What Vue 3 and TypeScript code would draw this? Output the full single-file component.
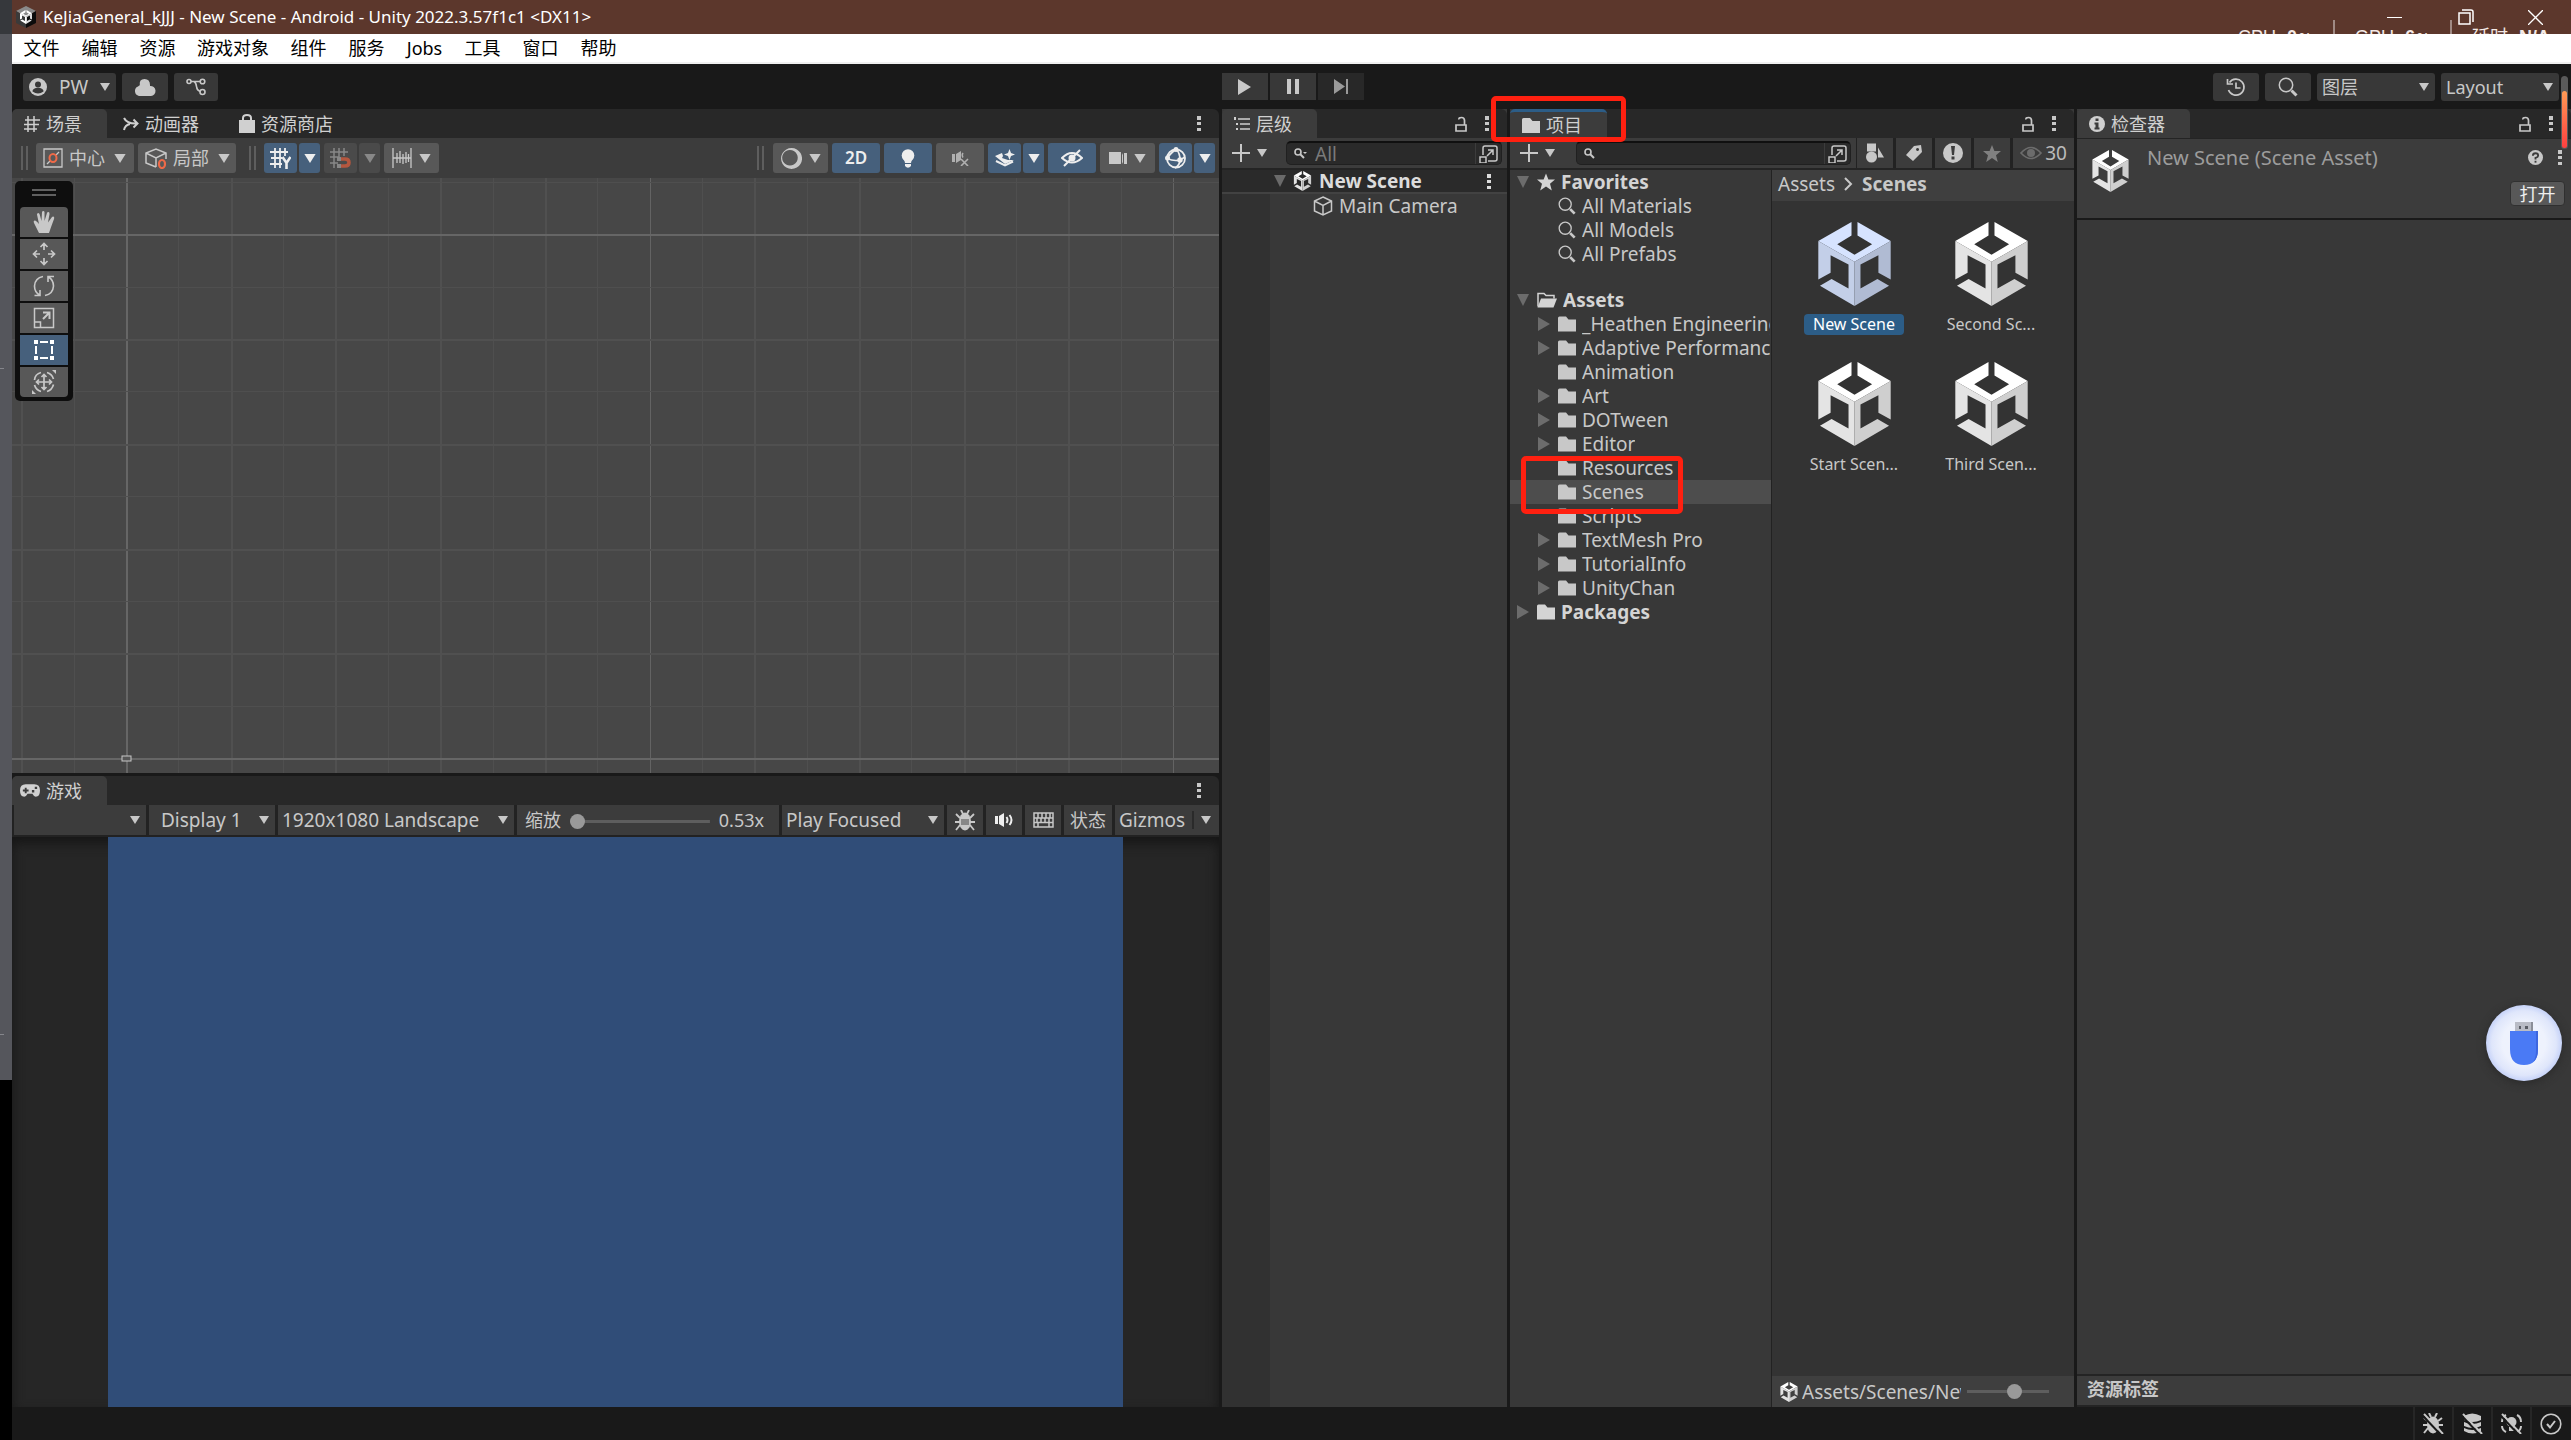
<script setup lang="ts">
import { h, ref } from 'vue'

const S = 'fill="none" stroke="currentColor"'
const logo = (a: string, b: string, c: string) =>
  `<path fill="${a}" d="M100 0V41L57 67l52 32 53-32-44-26V0L218 57 109 120 0 57z"/>` +
  `<path fill="${b}" d="M0 57l109 63V253L5 192l35-20 51 28V128L37 100v53L0 173z"/>` +
  `<path fill="${c}" d="M218 57L109 120V253L213 192l-35-20-51 28V128l54-28v53l37 20z"/>`

const glyphs: Record<string, [string, string]> = {
  unity: ['0 0 218 253', logo('#ffffff', '#e4e4e4', '#cfcfcf')],
  unitySelected: ['0 0 218 253', logo('#d6e3ff', '#c3cfe8', '#b0bbd3')],
  app: ['0 0 20 22', `<path fill="#8a8a8a" d="M10 0l10 5-10 6L0 5z"/><path fill="#3a3a3a" d="M0 5l10 6v11L0 17z"/><path fill="#0c0c0c" d="M20 5l-10 6v11l10-5z"/><g transform="translate(4 4) scale(.055)">${logo('#fff', '#fff', '#ddd')}</g>`],
  caret: ['0 0 10 8', '<path d="M0 0h10L5 8z"/>'],
  right: ['0 0 12 14', '<path d="M0 0v14l12-7z"/>'],
  down: ['0 0 12 12', '<path d="M0 0h12L6 12z"/>'],
  dots: ['0 0 4 15', '<path d="M0 0h4v4H0zM0 6h4v3H0zM0 12h4v3H0z"/>'],
  lock: ['0 0 12 16', `<path ${S} stroke-width="1.700" d="M1 9h10v6H1zM9.500 9V4.500Q9.500 1.500 6.500 1.500T4 3.500"/>`],
  user: ['0 0 18 18', '<circle cx="9" cy="9" r="9"/><circle cx="9" cy="6.500" r="3" fill="#383838"/><path fill="#383838" d="M3.500 13.500c0-5 11-5 11 0q-5.500 4-11 0z"/>'],
  cloud: ['0 0 22 17', '<path d="M5 17a5 5 0 0 1-1-9.500Q5 6.500 5.800 6.300 5 0 10.500 0T16 6q0 1 0 1a5 5 0 0 1 1 10z"/>'],
  branch: ['0 0 20 18', `<g ${S} stroke-width="1.600"><circle cx="3" cy="3.500" r="2"/><circle cx="16.500" cy="3.500" r="2.300"/><circle cx="16.500" cy="14" r="2.500"/><path d="M5 3.500h9M8 3.500q2 1 2.500 5t3.500 5"/></g>`],
  play: ['0 0 14 16', '<path d="M0 0l13 8-13 8z"/>'],
  pause: ['0 0 12 15', '<path d="M0 0h4v15H0zM8 0h4v15H8z"/>'],
  step: ['0 0 15 15', '<path d="M0 0l11 7.500L0 15zM12 0h2v15h-2z"/>'],
  history: ['0 0 20 20', `<path ${S} stroke-width="1.700" d="M3.500 5.500A8 8 0 1 1 2.500 13M1.500 2v5h5.500M10 5.500v5.500h4.500"/>`],
  search: ['0 0 20 20', `<circle cx="8" cy="8" r="6.700" ${S} stroke-width="1.500"/><path ${S} stroke-width="3" d="M13.500 13.500l5 5"/>`],
  mag: ['0 0 13 11', `<circle cx="4" cy="4" r="3" ${S} stroke-width="1.600"/><path ${S} stroke-width="2" d="M6 6l4 4"/>`],
  magMenu: ['0 0 13 11', `<circle cx="4" cy="4" r="3" ${S} stroke-width="1.600"/><path ${S} stroke-width="2" d="M6 6l4 4"/><path d="M9 4h4l-2 2z"/>`],
  hash: ['0 0 16 16', `<path ${S} stroke-width="1.500" d="M4 0v16M10 0v16M1 4h15M0 8.500h15M0 13h13"/>`],
  animator: ['0 0 16 14', `<path ${S} stroke-width="2" d="M1 1q3 6 13 5.500M1 13q1-5 6-6M10.500 2.500l4 4-4 4"/>`],
  bag: ['0 0 16 19', `<path d="M0 6h16v13H0z"/><path ${S} stroke-width="2" d="M4 9V4q0-3 4-3t4 3v5"/>`],
  list: ['0 0 16 14', `<path ${S} stroke-width="1.500" d="M4 2h12M6 7h10M6 12h10"/><path d="M0 0h2v3H0zM2 6h2v2H2zM2 11h2v2H2z"/>`],
  folder: ['0 0 18 15', '<path d="M0 1.500Q0 0 1.500 0H8l2.500 3H18v12H0z"/>'],
  folderOpen: ['0 0 20 15', `<path ${S} stroke-width="1.500" d="M1 14V1h6l2 2h8v3"/><path d="M4 6h16l-3.500 9H0.500z"/>`],
  info: ['0 0 16 16', '<circle cx="8" cy="8" r="8"/><path fill="#3c3c3c" d="M6.500 2.500h3v2.500h-3zM5.500 6.500h4v5h1v2h-5v-2h1v-3h-1z"/>'],
  help: ['0 0 16 16', '<circle cx="8" cy="8" r="8"/><path fill="none" stroke="#3c3c3c" stroke-width="2" d="M5.200 6.200Q5.200 3.500 8 3.500t2.800 2.500Q10.800 7.500 8 8.500v1.500"/><path fill="#3c3c3c" d="M7 11.500h2v2H7z"/>'],
  gamepad: ['0 0 21 13', '<path d="M6 0h9q6 0 6 6.500T16.500 13q-2 0-3.500-3H8q-1.500 3-3.500 3Q0 13 0 6.500T6 0z"/><path fill="#3c3c3c" d="M5 3.500h2v2h2v2H7v2H5v-2H3v-2h2zM15.500 2.500h2.500v2.500h-2.500zM12.500 6h2.500v2.500h-2.500z"/>'],
  pivot: ['0 0 20 20', `<path ${S} stroke-width="1.300" d="M1 1h18v18H1zM4 16l3-3M13 7l3-3"/><ellipse cx="10" cy="10" rx="3.500" ry="4" fill="none" stroke="#ef6a48" stroke-width="2"/>`],
  local: ['0 0 22 21', `<path ${S} stroke-width="1.500" d="M11 19L1 15V5l10-4 10 4v6M1 5l10 5 10-5M11 10v9"/><ellipse cx="17" cy="16" rx="3" ry="4" fill="#585858" stroke="#ef6a48" stroke-width="2.200"/>`],
  gridY: ['0 0 21 21', `<path ${S} stroke-width="1.800" d="M5 0v20M10 0v20M15 0v8M0 4h18M1 10h11M0 16h12"/><path ${S} stroke-width="2.600" d="M12.500 9l4 6 4-6M16.500 14v7"/>`],
  magnet: ['0 0 21 20', `<path ${S} stroke-width="1.500" d="M4 0v20M9 0v10M14 0v8M0 4h18M0 9h9M0 15h8"/><path fill="none" stroke="#b4573f" stroke-width="3.500" d="M11 11h4q4 0 4 3.500T15 18h-4"/><path d="M7 9h4v4H7zM7 16h4v4H7z"/>`],
  ruler: ['0 0 20 20', `<path ${S} stroke-width="1.300" d="M1 0v20M19 0v20M1 10h18M5 5v10M8 3v12M11 6v10M14 4v11M16.500 6v8"/>`],
  sphere: ['0 0 21 21', `<path fill-rule="evenodd" d="M10.500 0a10.500 10.500 0 1 0 .1 0zM9 2a7.800 7.800 0 1 1-.1 0z"/>`],
  bulb: ['0 0 14 19', '<circle cx="7" cy="6.500" r="6.300"/><path d="M3 10h8l-1 4H4zM4 15h6v2q-3 3.500-6 0z"/>'],
  mute: ['0 0 17 15', `<path d="M0 3h3v8H0zM4 3l5-3v9l-5 3z"/><path ${S} stroke-width="1.600" d="M11 2q-1.500 2 0 4.500M9 8l7 7M16 8l-7 7"/>`],
  effects: ['0 0 20 18', `<path d="M14.500 0l1.500 4 4 1.500-4 1.500-1.500 4-1.500-4-4-1.500 4-1.500zM0 7l7-3 1 3-1 2 6 2 6 0-9 4z"/><path ${S} stroke-width="2" d="M1 12l9 4.500 8-4"/>`],
  eyeOff: ['0 0 22 18', `<path ${S} stroke-width="2" d="M1 9Q11-1 21 9 11 18 1 9zM3 17L19 1"/><circle cx="11" cy="9" r="3.500"/>`],
  camera: ['0 0 18 13', '<path d="M0 0h12v12H0zM13 3l1-2v11l-1-2zM15 1h3v11h-3z"/>'],
  gizmo: ['0 0 22 22', `<circle cx="11" cy="11.500" r="9" ${S} stroke-width="1.800"/><path ${S} stroke-width="1.700" d="M11 2Q4 8 2 11.500q7 3 13 1.500 0-7-4-11M15 13q0 5-5 8M15 13l5-3"/><circle cx="11" cy="2.500" r="2.500"/><circle cx="2.500" cy="11" r="2.500"/><circle cx="15" cy="13" r="2.700"/>`],
  hand: ['0 0 22 22', `<path d="M6 22Q4 18 1 12q-1-2 .5-2.500T6 13L4 3.500Q4 2 5.200 2t1.500 1.500L8.500 10 9 1.200Q9.200 0 10.300 0t1.200 1.200V10L14 2q.5-1.200 1.500-1T16.500 3L15 11.500 19 6q1-1 1.800-.2T21 8q-3 8-5 14z"/>`],
  move: ['0 0 24 24', `<path ${S} stroke-width="1.700" d="M12 8V2M8.500 5L12 1.500 15.500 5M12 16v6M8.500 19l3.500 3.500 3.500-3.500M8 12H2M5 8.500L1.500 12 5 15.500M16 12h6M19 8.500l3.500 3.500-3.500 3.500"/>`],
  rotate: ['0 0 22 22', `<path ${S} stroke-width="1.600" d="M10 1.500Q2 3 1.500 11q0 6 5 9M1.500 20.500H7V15M12 20.500q8-1.500 8.500-9.500 0-6-5-9M21 1.500h-6V7"/>`],
  scale: ['0 0 22 22', `<path ${S} stroke-width="1.500" d="M1.500 1.500h19v19h-19zM1.500 15h6v5.500"/><path ${S} stroke-width="2" d="M10 12l6-6M10 5.500h6.500V12"/>`],
  rect: ['0 0 20 20', `<path ${S} stroke-width="2" d="M6 2h8M6 18h8M2 6v8M18 6v8"/><path d="M0 0h4v4H0zM16 0h4v4h-4zM0 16h4v4H0zM16 16h4v4h-4z"/>`],
  transform: ['0 0 24 24', `<g ${S} stroke-width="1.700"><path d="M12 5v14M5 12h14M9.500 7L12 4.500 14.500 7M9.500 17l2.500 2.500 2.500-2.500M7 9.500L4.500 12 7 14.500M17 9.500l2.500 2.500-2.500 2.500M9 2.500Q3 4 2.500 10M15 2.500Q20 4 21.500 9M9 21.500Q4 20 2.500 15M15 21.500q5-1.500 6.500-7"/></g><path d="M20 0h4v4zM0 20v4h4z"/>`],
  plus: ['0 0 18 18', `<path ${S} stroke-width="2" d="M9 0v18M0 9h18"/>`],
  picker: ['0 0 19 18', `<path ${S} stroke-width="1.500" d="M4 10V3q0-2 2-2h10q2 0 2 2v11q0 2-2 2H9M8 11l6-6M9 5h5v5M1 12h6v6H1z"/>`],
  cube: ['0 0 20 20', `<path ${S} stroke-width="1.500" d="M10 1l8.500 4v10L10 19l-8.500-4V5zM1.500 5L10 9.500 18.500 5M10 9.500V19"/>`],
  star: ['0 0 18 17', '<path d="M9 0l2.400 6H18l-5 4.200L14.800 17 9 13l-5.800 4L5 10.200 0 6h6.600z"/>'],
  shapes: ['0 0 18 19', '<path d="M1 0h9v8H1zM12 4l6 10h-6z"/><circle cx="5.500" cy="13.500" r="5.500"/>'],
  tag: ['0 0 16 16', '<path fill-rule="evenodd" d="M8 1l7-1 1 7-9 9-7-6zM11.500 3a1.500 1.500 0 1 0 .1 0z"/>'],
  alert: ['0 0 20 20', '<circle cx="10" cy="10" r="10"/><path fill="#3c3c3c" d="M8 3h4l-1 9H9zM8.500 13.500h3v3h-3z"/>'],
  eye: ['0 0 22 14', `<path ${S} stroke-width="1.700" d="M1 7Q11-4 21 7 11 18 1 7z"/><circle cx="11" cy="7" r="4"/>`],
  crumb: ['0 0 9 14', `<path ${S} stroke-width="2" d="M1 1l6 6-6 6"/>`],
  bug: ['0 0 20 21', `<ellipse cx="10" cy="11.500" rx="6" ry="9"/><path ${S} stroke-width="1.800" d="M6 0l2 4M14 0l-2 4M1 4l4 4M19 4l-4 4M0 12h20M1 20l4-5M19 20l-4-5"/><path fill="#888" d="M6 9h8v6H6z"/>`],
  sound: ['0 0 18 14', `<path d="M0 3h3v8H0zM4 3l5-3v14l-5-3z"/><path ${S} stroke-width="2" d="M11.500 4q2 3 0 6M14.500 2q4 5 0 10"/>`],
  keyboard: ['0 0 21 16', `<path ${S} stroke-width="1.500" d="M1 1h19v14H1zM1 6h19M1 10.500h19M5 1v5M9 1v5M13 1v5M17 1v5M4 6v4M8 6v4M12 6v4M16 6v4M5 11v4M16 11v4"/>`],
  bugOff: ['0 0 21 21', `<ellipse cx="10" cy="12" rx="6" ry="8.500"/><path ${S} stroke-width="2" d="M6 0l2 4M14 0l-2 4M1 5l4 3M19 5l-4 3M0 12h20M1 20l4-5M19 20l-4-5M1 1l19 20"/><path stroke="#191919" stroke-width="2" d="M0 3l18 19"/>`],
  dbOff: ['0 0 21 21', `<path d="M2 3q8-5 17 0v4q-8 4-17 0zM2 9q8 4 17 0v4q-8 4-17 0zM2 15q8 4 17 0v3q-8 5-17 0z"/><path ${S} stroke-width="2" d="M1 1l19 20"/><path stroke="#191919" stroke-width="2" d="M0 3l18 19"/>`],
  lightOff: ['0 0 21 21', `<path ${S} stroke-width="2" d="M5 2Q1 4 1 9M1 13q0 4 4 6M16 2q4 2 4 7M20 13q0 4-4 6"/><circle cx="10.500" cy="9" r="5"/><path d="M8 14h5v4H8z"/><path ${S} stroke-width="2" d="M1 1l19 20"/><path stroke="#191919" stroke-width="2" d="M0 3l18 19"/>`],
  check: ['0 0 22 22', `<circle cx="11" cy="11" r="9.800" ${S} stroke-width="1.600"/><path ${S} stroke-width="2" d="M7 11l3 3.500 5-6.500"/>`],
  min: ['0 0 15 15', '<path stroke="currentColor" d="M0 7.500h15"/>'],
  restore: ['0 0 16 16', `<path ${S} stroke-width="1.500" d="M1 4h11v11H1zM4 1h9q2 0 2 2v10"/>`],
  close: ['0 0 15 15', `<path ${S} stroke-width="1.300" d="M0 0l15 15M15 0L0 15"/>`],
  usb: ['0 0 28 44', '<path fill="#b9bcc6" d="M5 0h18v10H5z"/><path fill="#8b8e98" d="M21 0h2v10h-2z"/><path fill="#5a5d66" d="M9 4h2v3H9zM15 4h3v3h-3z"/><path fill="#4a7af5" d="M0 9h28v18q0 16-14 16T0 27z"/><path fill="#3c66e0" d="M26 9h2v18q0 10-5 13 3-4 3-11z"/>'],
}

const Icon = (p: { n: string; w: number | string; t: number | string }) => {
  const [box, body] = glyphs[p.n]
  return h('svg', {
    viewBox: box, width: p.w, height: p.t, fill: 'currentColor',
    'aria-hidden': 'true', preserveAspectRatio: 'xMidYMid meet', innerHTML: body,
  })
}
Icon.props = ['n', 'w', 't']

const menus = ['文件', '编辑', '资源', '游戏对象', '组件', '服务', 'Jobs', '工具', '窗口', '帮助']
const tools: [string, string, number][] = [
  ['hand', '手形工具', 22], ['move', '移动', 24], ['rotate', '旋转', 22],
  ['scale', '缩放', 22], ['rect', '矩形', 20], ['transform', '变换', 24],
]

interface Node { label: string; icon: string; kids?: boolean; open?: boolean; root?: boolean; gap?: boolean; selected?: boolean }
const tree: Node[] = [
  { label: 'Favorites', icon: 'star', root: true, kids: true, open: true },
  { label: 'All Materials', icon: 'search' },
  { label: 'All Models', icon: 'search' },
  { label: 'All Prefabs', icon: 'search' },
  { label: 'Assets', icon: 'folderOpen', root: true, kids: true, open: true, gap: true },
  { label: '_Heathen Engineering', icon: 'folder', kids: true },
  { label: 'Adaptive Performance', icon: 'folder', kids: true },
  { label: 'Animation', icon: 'folder' },
  { label: 'Art', icon: 'folder', kids: true },
  { label: 'DOTween', icon: 'folder', kids: true },
  { label: 'Editor', icon: 'folder', kids: true },
  { label: 'Resources', icon: 'folder' },
  { label: 'Scenes', icon: 'folder', selected: true },
  { label: 'Scripts', icon: 'folder' },
  { label: 'TextMesh Pro', icon: 'folder', kids: true },
  { label: 'TutorialInfo', icon: 'folder', kids: true },
  { label: 'UnityChan', icon: 'folder', kids: true },
  { label: 'Packages', icon: 'folder', root: true, kids: true },
]
const assets = ['New Scene', 'Second Sc...', 'Start Scen...', 'Third Scen...']

// World grid of the 2D scene view: ten cells per major line.
const cell = 52.36
const originX = 115
const originY = 581
const line = (origin: number, i: number) => ({
  at: Math.round(origin + i * cell),
  kind: i === 0 ? 'axis' : i % 10 === 0 ? 'major' : i % 2 === 0 ? 'even' : 'odd',
})
const vertical = Array.from({ length: 60 }, (_, i) => line(originX, i - 2))
const horizontal = Array.from({ length: 14 }, (_, i) => {
  const l = line(originY, -i)
  return i === 10 ? { ...l, kind: 'axis' } : l
})

const zoomScale = ref(0)
const thumbSize = ref(60)
const hierarchyQuery = ref('')
const projectQuery = ref('')
</script>

<template>
  <div class="screen">
    <aside class="edge"><i class="edge-top"></i><i class="edge-mid"></i></aside>
    <div class="editor">
      <header class="titlebar">
        <Icon n="app" w="20" t="22" />
        <h1>KeJiaGeneral_kJJJ - New Scene - Android - Unity 2022.3.57f1c1 &lt;DX11&gt;</h1>
        <div class="window-buttons">
          <button aria-label="最小化"><Icon n="min" w="15" t="15" /></button>
          <button aria-label="还原"><Icon n="restore" w="16" t="16" /></button>
          <button aria-label="关闭"><Icon n="close" w="15" t="15" /></button>
        </div>
        <div class="stats">
          <span>CPU <b>0<small>%</small></b></span><span>GPU <b>6<small>%</small></b></span><span>延时 <b>N/A</b></span>
        </div>
      </header>
      <nav class="menubar">
        <button v-for="m in menus" :key="m">{{ m }}</button>
      </nav>

      <div class="mainbar">
        <div class="main-left">
          <button class="box user"><Icon n="user" w="18" t="18" /><span>PW</span><Icon n="caret" w="10" t="8" /></button>
          <button class="box" aria-label="云服务"><Icon n="cloud" w="22" t="17" /></button>
          <button class="box vcs" aria-label="版本控制"><Icon n="branch" w="20" t="18" /></button>
        </div>
        <div class="main-play">
          <button class="box" aria-label="播放"><Icon n="play" w="14" t="16" /></button>
          <button class="box" aria-label="暂停"><Icon n="pause" w="12" t="15" /></button>
          <button class="box faded" aria-label="步进"><Icon n="step" w="15" t="15" /></button>
        </div>
        <div class="main-right">
          <button class="box" aria-label="历史"><Icon n="history" w="20" t="20" /></button>
          <button class="box" aria-label="搜索"><Icon n="search" w="20" t="20" /></button>
          <label class="box pick"><select aria-label="图层"><option>图层</option></select><Icon n="caret" w="10" t="8" /></label>
          <label class="box pick"><select aria-label="布局"><option>Layout</option></select><Icon n="caret" w="10" t="8" /></label>
        </div>
      </div>

      <main class="docks">
        <div class="column">
          <section class="scene">
            <div class="tabs">
              <button class="tab on"><Icon n="hash" w="16" t="16" />场景</button>
              <button class="tab"><Icon n="animator" w="16" t="14" />动画器</button>
              <button class="tab"><Icon n="bag" w="16" t="19" />资源商店</button>
              <button class="dots" aria-label="更多"><Icon n="dots" w="4" t="15" /></button>
            </div>
            <div class="scenebar">
              <i class="grip"></i>
              <button class="sb wide"><Icon n="pivot" w="20" t="20" />中心<Icon n="caret" w="12" t="9" /></button>
              <button class="sb wide"><Icon n="local" w="22" t="21" />局部<Icon n="caret" w="12" t="9" /></button>
              <i class="grip second"></i>
              <div class="pair"><button class="sb on" aria-label="网格"><Icon n="gridY" w="21" t="21" /></button><button class="sb on arrow" aria-label="网格选项"><Icon n="caret" w="12" t="9" /></button></div>
              <div class="pair dim"><button class="sb" aria-label="吸附"><Icon n="magnet" w="21" t="20" /></button><button class="sb arrow" aria-label="吸附选项"><Icon n="caret" w="12" t="9" /></button></div>
              <button class="sb menu" aria-label="增量"><Icon n="ruler" w="20" t="20" /><Icon n="caret" w="12" t="9" /></button>
              <i class="grip push"></i>
              <button class="sb menu" aria-label="绘制模式"><Icon n="sphere" w="21" t="21" /><Icon n="caret" w="12" t="9" /></button>
              <button class="sb mid on two">2D</button>
              <button class="sb mid on" aria-label="光照"><Icon n="bulb" w="14" t="19" /></button>
              <button class="sb mid soft" aria-label="静音"><Icon n="mute" w="17" t="15" /></button>
              <div class="pair"><button class="sb on" aria-label="特效"><Icon n="effects" w="20" t="18" /></button><button class="sb on arrow" aria-label="特效选项"><Icon n="caret" w="12" t="9" /></button></div>
              <button class="sb mid on" aria-label="隐藏对象"><Icon n="eyeOff" w="22" t="18" /></button>
              <button class="sb menu" aria-label="相机"><Icon n="camera" w="18" t="13" /><Icon n="caret" w="12" t="9" /></button>
              <div class="pair"><button class="sb on" aria-label="Gizmos"><Icon n="gizmo" w="22" t="22" /></button><button class="sb on arrow" aria-label="Gizmos 选项"><Icon n="caret" w="12" t="9" /></button></div>
            </div>
            <div class="canvas">
              <svg class="world" aria-hidden="true">
                <rect v-for="l in vertical" :key="'v' + l.at" :class="l.kind" :x="l.at - 1" y="0" :width="l.kind === 'odd' || l.kind === 'major' ? 1 : 2" height="100%" />
                <rect v-for="l in horizontal" :key="'h' + l.at" :class="l.kind" x="0" :y="l.at - 1" width="100%" :height="l.kind === 'odd' ? 1 : 2" />
                <rect class="handle" x="110" y="578" width="9" height="5" />
              </svg>
              <div class="palette">
                <i class="pgrip"></i>
                <button v-for="t in tools" :key="t[0]" :aria-label="t[1]" :class="{ on: t[0] === 'rect' }"><Icon :n="t[0]" :w="t[2]" :t="t[2]" /></button>
              </div>
            </div>
          </section>

          <section class="game">
            <div class="tabs">
              <button class="tab on"><Icon n="gamepad" w="20" t="13" />游戏</button>
              <button class="dots" aria-label="更多"><Icon n="dots" w="4" t="15" /></button>
            </div>
            <div class="gamebar">
              <label class="gb pick first"><select aria-label="视图"><option></option></select><Icon n="caret" w="10" t="8" /></label>
              <label class="gb pick display"><select aria-label="显示器"><option>Display 1</option></select><Icon n="caret" w="10" t="8" /></label>
              <label class="gb pick ratio"><select aria-label="分辨率"><option>1920x1080 Landscape</option></select><Icon n="caret" w="10" t="8" /></label>
              <label class="gb zoom"><span>缩放</span><input v-model="zoomScale" type="range" min="0" max="100" /><output>0.53x</output></label>
              <label class="gb pick focus"><select aria-label="运行模式"><option>Play Focused</option></select><Icon n="caret" w="10" t="8" /></label>
              <button class="gb ico" aria-label="调试"><Icon n="bug" w="20" t="21" /></button>
              <button class="gb ico bright" aria-label="声音"><Icon n="sound" w="18" t="14" /></button>
              <button class="gb ico" aria-label="键盘"><Icon n="keyboard" w="21" t="16" /></button>
              <button class="gb state">状态</button>
              <button class="gb giz">Gizmos<i></i><Icon n="caret" w="10" t="8" /></button>
            </div>
            <div class="gameview"><div class="frame"></div></div>
          </section>
        </div>

        <section class="panel hierarchy">
          <div class="tabs">
            <button class="tab on"><Icon n="list" w="16" t="14" />层级</button>
            <button class="lock" aria-label="锁定"><Icon n="lock" w="12" t="16" /></button>
            <button class="dots" aria-label="更多"><Icon n="dots" w="4" t="15" /></button>
          </div>
          <div class="toolbar">
            <button class="add" aria-label="创建"><Icon n="plus" w="18" t="18" /><Icon n="caret" w="10" t="8" /></button>
            <div class="search"><Icon n="magMenu" w="13" t="11" /><input v-model="hierarchyQuery" type="text" aria-label="搜索层级" placeholder="All" /><button aria-label="选择搜索"><Icon n="picker" w="19" t="18" /></button></div>
          </div>
          <ul class="objects">
            <li class="scene-row"><Icon class="twist" n="down" w="12" t="12" /><Icon n="unity" w="19" t="20" /><b>New Scene</b><button class="dots" aria-label="场景菜单"><Icon n="dots" w="4" t="15" /></button></li>
            <li class="object"><Icon n="cube" w="20" t="20" />Main Camera</li>
          </ul>
        </section>

        <section class="panel project">
          <div class="tabs">
            <button class="tab on focused"><Icon n="folder" w="18" t="15" />项目</button>
            <button class="lock" aria-label="锁定"><Icon n="lock" w="12" t="16" /></button>
            <button class="dots" aria-label="更多"><Icon n="dots" w="4" t="15" /></button>
            <i class="mark mark-tab"></i>
          </div>
          <div class="toolbar">
            <button class="add" aria-label="创建"><Icon n="plus" w="18" t="18" /><Icon n="caret" w="10" t="8" /></button>
            <div class="search"><Icon n="mag" w="13" t="11" /><input v-model="projectQuery" type="text" aria-label="搜索项目" /><button aria-label="选择搜索"><Icon n="picker" w="19" t="18" /></button></div>
            <div class="filters">
              <button aria-label="按类型"><Icon n="shapes" w="18" t="20" /></button>
              <button aria-label="按标签"><Icon n="tag" w="16" t="16" /></button>
              <button aria-label="按日志"><Icon n="alert" w="20" t="20" /></button>
              <button class="off" aria-label="收藏"><Icon n="star" w="18" t="17" /></button>
              <button class="hidden" aria-label="隐藏的包"><Icon n="eye" w="22" t="14" />30</button>
            </div>
          </div>
          <div class="browser">
            <ul class="tree">
              <li v-for="n in tree" :key="n.label" :class="{ root: n.root, gap: n.gap, selected: n.selected }">
                <span class="fold"><Icon v-if="n.kids" :n="n.open ? 'down' : 'right'" w="12" :t="n.open ? 12 : 14" /></span>
                <Icon :n="n.icon" :w="n.icon === 'folderOpen' ? 20 : 18" t="18" />
                <span class="name">{{ n.label }}</span>
                <i v-if="n.selected" class="mark mark-row"></i>
              </li>
            </ul>
            <div class="content">
              <nav class="crumbs"><a href="#">Assets</a><Icon n="crumb" w="9" t="14" /><a href="#"><b>Scenes</b></a></nav>
              <ul class="assets">
                <li v-for="(a, i) in assets" :key="a" :class="{ selected: i === 0 }"><Icon :n="i === 0 ? 'unitySelected' : 'unity'" w="73" t="84" /><span>{{ a }}</span></li>
              </ul>
              <footer><Icon n="unity" w="18" t="20" /><span>Assets/Scenes/New Scene.unity</span><input v-model="thumbSize" type="range" min="0" max="100" aria-label="图标大小" /></footer>
            </div>
          </div>
        </section>

        <section class="panel inspector">
          <div class="tabs">
            <button class="tab on"><Icon n="info" w="16" t="16" />检查器</button>
            <button class="lock" aria-label="锁定"><Icon n="lock" w="12" t="16" /></button>
            <button class="dots" aria-label="更多"><Icon n="dots" w="4" t="15" /></button>
          </div>
          <div class="asset-head">
            <Icon n="unity" w="37" t="42" />
            <h2>New Scene (Scene Asset)</h2>
            <div class="head-actions">
              <div><Icon n="help" w="15" t="15" /><Icon n="dots" w="4" t="15" /></div>
              <button>打开</button>
            </div>
          </div>
          <div class="fill"></div>
          <footer><b>资源标签</b></footer>
        </section>
      </main>

      <div class="statusbar">
        <button aria-label="调试器"><Icon n="bugOff" w="21" t="21" /></button>
        <button aria-label="缓存"><Icon n="dbOff" w="21" t="21" /></button>
        <button aria-label="光照"><Icon n="lightOff" w="21" t="21" /></button>
        <button aria-label="进度"><Icon n="check" w="22" t="22" /></button>
      </div>
    </div>
    <div class="meter"><i></i></div>
    <button class="usb" aria-label="U 盘"><Icon n="usb" w="28" t="44" /></button>
  </div>
</template>

<style>
body { background: #191919; }
</style>

<style scoped>
.screen { position: relative; display: flex; min-height: 100vh; font: 19px/24px "Noto Sans", "Noto Sans CJK SC", sans-serif; color: #c8c8c8; background: #191919; overflow: hidden; }
.screen *, .screen { box-sizing: border-box; }
button, input, select { font: inherit; color: inherit; border: 0; margin: 0; padding: 0; background: none; border-radius: 0; }
button { display: flex; align-items: center; justify-content: center; white-space: nowrap; }
svg { flex: none; display: block; }
ul { list-style: none; margin: 0; padding: 0; }
a { color: inherit; text-decoration: none; }
h1, h2 { margin: 0; font-weight: 400; }

.edge { position: relative; flex: none; width: 12px; background: linear-gradient(#36383c 0 34px, #55565c 34px 75%, #000 75%); }
.edge i { position: absolute; left: 0; width: 4px; height: 1px; background: #85868c; }
.edge-top { top: 368px; }
.edge-mid { top: 1034px; }
.editor { flex: 1; min-width: 0; display: flex; flex-direction: column; }

.titlebar { position: relative; display: flex; align-items: center; height: 34px; padding-left: 4px; background: #5c372c; color: #fff; overflow: hidden; }
.titlebar h1 { margin-left: 7px; font-size: 17px; white-space: nowrap; }
.stats { position: absolute; right: 4px; top: 20px; display: flex; font: 18px/34px "Liberation Sans", "Noto Sans CJK SC", sans-serif; color: #f3e9e6; white-space: nowrap; }
.stats span { padding-left: 20px; height: 34px; width: 117px; border-left: 2px solid #a08a84; }
.stats span:first-child { border-color: transparent; }
.stats b { margin-left: 6px; }
.stats small { margin-left: 2px; font-size: 14px; }
.window-buttons { display: flex; margin: 0 28px 0 auto; gap: 54px; }
.window-buttons button:nth-child(2) { margin-left: 2px; }
.menubar { display: flex; gap: 22px; height: 30px; padding-left: 11px; background: #fff; border-bottom: 2px solid #f0f0f0; color: #000; font-size: 18px; }
.menubar button { min-width: 37px; margin-right: -1px; }

.mainbar { display: grid; grid-template-columns: 1210fr 855fr 494fr; height: 45px; flex: none; }
.mainbar > div { display: flex; align-items: flex-start; padding-top: 9px; }
.main-left { padding-left: 11px; gap: 6px; }
.box { height: 28px; width: 46px; background: #383838; border-radius: 3px; }
.box.vcs { width: 44px; }
.user { width: 93px; gap: 12px; }
.main-play { gap: 2px; }
.main-play .box { height: 27px; border-radius: 0; }
.main-play .faded { background: #282828; color: #9a9a9a; }
.main-right { justify-content: flex-end; gap: 6px; padding-right: 12px; }
.pick { position: relative; display: flex; align-items: center; }
.pick select { appearance: none; width: 100%; height: 100%; padding-left: 5px; outline: 0; }
.pick svg { position: absolute; right: 6px; pointer-events: none; }
.box.pick { width: 118px; font-size: 18px; }

.docks { flex: 1; display: grid; grid-template-columns: 1207fr 285fr 564fr 494fr; gap: 3px; min-height: 0; }
.docks > * { min-width: 0; display: flex; flex-direction: column; }
.column { gap: 3px; }
.tabs { position: relative; display: flex; height: 29px; flex: none; background: #282828; border-radius: 6px 6px 0 0; padding-right: 18px; }
.tab { gap: 6px; padding: 0 24px 0 16px; font-size: 18px; border-radius: 5px 5px 0 0; color: #d0d0d0; }
.tab.on { padding: 0 25px 0 12px; background: #3c3c3c; }
.game .tab.on { padding-left: 8px; }
.focused { border-top: 3px solid #2c5d87; }
.dots { margin-left: auto; }
.tabs .lock { margin-left: auto; }
.tabs .lock + .dots { margin-left: 18px; }

.scene { display: flex; flex-direction: column; flex: 664 1 0; min-height: 0; }
.game { display: flex; flex-direction: column; flex: 631 1 0; min-height: 0; }
.scenebar { display: flex; align-items: center; gap: 4px; height: 40px; flex: none; padding: 0 4px 0 9px; background: #3c3c3c; font-size: 18px; }
.grip { width: 7px; height: 24px; margin-right: 4px; border: solid #5e5e5e; border-width: 0 2px; }
.second { margin: 0 4px 0 9px; }
.push { margin-left: auto; margin-right: 5px; }
.sb { height: 30px; width: 33px; border-radius: 3px; background: #585858; gap: 6px; }
.wide { width: 98px; gap: 6px; justify-content: flex-start; padding-left: 7px; }
.wide svg:last-child { margin-left: 3px; }
.arrow { width: 21px; }
.menu { width: 55px; gap: 7px; }
.mid { width: 48px; }
.sb.on { background: #46607c; color: #eee; }
.two { font-weight: 600; font-size: 17px; }
.soft { color: #b0b0b0; }
.pair { display: flex; gap: 2px; }
.dim .sb { background: #4a4a4a; color: #888; }
.canvas { position: relative; flex: 1; min-height: 0; background: #474747; overflow: hidden; }
.world { position: absolute; width: 100%; height: 100%; }
.axis { fill: #666; }
.major { fill: #636363; }
.even { fill: #505050; }
.odd { fill: #4f4f4f; }
.handle { fill: #555; stroke: #c8c8c8; }
.palette { position: absolute; left: 3px; top: 3px; display: flex; flex-direction: column; gap: 2px; padding: 0 5px 4px; background: #0e0e0e; border-radius: 5px; }
.pgrip { height: 7px; width: 24px; margin: 8px auto 9px; border: solid #606060; border-width: 2px 0; }
.palette button { width: 48px; height: 30px; background: #585858; }
.palette button:nth-of-type(1) { border-radius: 4px 4px 0 0; }
.palette button:nth-of-type(6) { border-radius: 0 0 4px 4px; }
.palette .on { background: #46607c; color: #fff; }

.gamebar { display: flex; gap: 3px; height: 32px; flex: none; padding-left: 2px; padding-bottom: 2px; background: #222; }
.gb { display: flex; align-items: center; height: 30px; background: #3c3c3c; }
.first { width: 132px; }
.display { width: 126px; }
.display select { padding-left: 12px; }
.ratio { width: 236px; }
.ratio select { padding-left: 4px; }
.focus { width: 162px; }
.focus select { padding-left: 4px; }
.zoom { flex: 1; padding: 0 15px 0 8px; font-size: 18px; }
.zoom input { flex: 1; min-width: 0; margin: 2px 9px 0 9px; }
input[type='range'] { appearance: none; height: 16px; background: linear-gradient(#5e5e5e, #5e5e5e) center / 100% 3px no-repeat; }
input[type='range']::-webkit-slider-thumb { appearance: none; width: 15px; height: 15px; border-radius: 50%; background: #999; }
.ico { width: 36px; }
.bright { color: #eee; }
.state { width: 48px; font-size: 18px; }
.giz { width: 104px; padding-right: 8px; justify-content: space-between; padding-left: 4px; }
.giz i { width: 2px; height: 18px; background: #2a2a2a; }
.gameview { flex: 1; min-height: 0; padding: 0 96px; background: #262626; box-shadow: inset 0 6px 12px #161616; }
.frame { height: 100%; background: #304d78; }

.panel { background: #383838; }
.toolbar { display: flex; align-items: center; height: 32px; flex: none; background: #3c3c3c; border-bottom: 2px solid #242424; }
.add { gap: 7px; padding: 0 19px 0 10px; }
.search { flex: 1; min-width: 0; display: flex; align-items: center; height: 24px; margin-right: 5px; padding-left: 7px; background: #2a2a2a; border: 1px solid #202020; border-top: 2px solid #101010; border-radius: 5px; }
.search input { flex: 1; min-width: 0; height: 21px; margin-left: 8px; outline: 0; }
.search input::placeholder { color: #7a7a7a; opacity: 1; }
.search button { width: 26px; height: 21px; border-left: 1px solid #3c3c3c; }
.objects { flex: 1; background: linear-gradient(90deg, #313131 48px, #383838 48px); }
.objects li { display: flex; align-items: center; height: 24px; }
.scene-row { padding: 0 16px 0 52px; background: #2a2a2a; border-bottom: 2px solid #424242; color: #dcdcdc; }
.scene-row .twist { margin-right: 7px; color: #6a6a6a; }
.scene-row b { margin-left: 7px; }
.object { padding-left: 91px; gap: 6px; }

.project .add { padding-right: 21px; }
.filters { display: flex; gap: 3px; background: #222; height: 30px; padding-left: 1px; }
.filters button { width: 36px; background: #3c3c3c; }
.filters .off { color: #808080; }
.filters .hidden { width: 61px; gap: 3px; color: #bbb; }
.hidden svg { color: #6c6c6c; }
.project .search { margin-right: 5px; }
.browser { flex: 1; min-height: 0; display: grid; grid-template-columns: 262fr 302fr; }
.tree { min-width: 0; border-right: 1px solid #222; }
.tree li { position: relative; display: flex; align-items: center; height: 24px; padding-left: 26px; white-space: nowrap; }
.tree li.root { padding-left: 5px; font-weight: 700; color: #d4d4d4; }
.tree li.gap { margin-top: 22px; }
.tree li.selected { background: #4d4d4d; }
.fold { width: 22px; flex: none; display: flex; justify-content: center; color: #6c6c6c; padding-right: 6px; }
.name { margin-left: 6px; overflow: hidden; margin-right: 1px; }
.content { min-width: 0; display: flex; flex-direction: column; background: #333; }
.crumbs { display: flex; align-items: center; gap: 9px; height: 31px; padding: 0 6px 4px; background: #3f3f3f; flex: none; }
.assets { flex: 1; display: grid; grid-template-columns: repeat(2, 100px); grid-auto-rows: 140px; column-gap: 37px; padding: 21px 0 0 32px; }
.assets li { display: flex; flex-direction: column; align-items: center; gap: 8px; font-size: 16px; line-height: 21px; }
.assets span { width: 100px; text-align: center; white-space: nowrap; border-radius: 4px; }
.assets .selected span { background: #2c5d87; color: #fff; }
.content footer { display: flex; align-items: center; height: 31px; padding: 0 25px 0 8px; background: #3f3f3f; }
.content footer span { flex: 1; min-width: 0; overflow: hidden; margin: 0 6px 0 4px; white-space: nowrap; }
.content footer input { width: 82px; }

.asset-head { display: flex; align-items: flex-start; height: 82px; padding: 11px 6px 0 15px; background: #3c3c3c; border-top: 1px solid #242424; border-bottom: 2px solid #1a1a1a; }
.asset-head h2 { margin: -4px 0 0 18px; font-size: 20px; color: #9c9c9c; }
.head-actions { margin-left: auto; display: flex; flex-direction: column; align-items: flex-end; gap: 16px; }
.head-actions div { display: flex; gap: 15px; margin-right: 3px; }
.head-actions button { width: 55px; height: 25px; font-size: 18px; color: #eee; background: #585858; border: 1px solid #303030; border-radius: 4px; }
.fill { flex: 1; }
.inspector footer { height: 33px; padding: 1px 0 0 10px; font-size: 18px; background: #3c3c3c; border: solid #242424; border-width: 2px 0; }

.statusbar { display: flex; justify-content: flex-end; height: 33px; flex: none; padding-right: 2px; }
.statusbar button { width: 39px; border-left: 2px solid #262626; }

.meter { position: absolute; right: 3px; top: 76px; width: 7px; height: 73px; padding: 15px 1px 1px; background: #5a5a5a; border-radius: 4px; }
.meter i { display: block; height: 100%; border-radius: 3px; background: linear-gradient(#ff9a55, #ff4040); }
.usb { position: absolute; right: 9px; bottom: 359px; width: 76px; height: 76px; padding-top: 2px; border-radius: 50%; background: radial-gradient(circle, #eef2fd 40%, #dfe6fb 60%, #c3d0f8 72%); box-shadow: 0 2px 8px #2a2a2a; }

.mark { position: absolute; z-index: 2; border: 5px solid #ff2010; border-radius: 5px; pointer-events: none; }
.mark-tab { left: -19px; top: -13px; width: 135px; height: 46px; }
.mark-row { left: 11px; top: -24px; width: 162px; height: 58px; }
</style>
